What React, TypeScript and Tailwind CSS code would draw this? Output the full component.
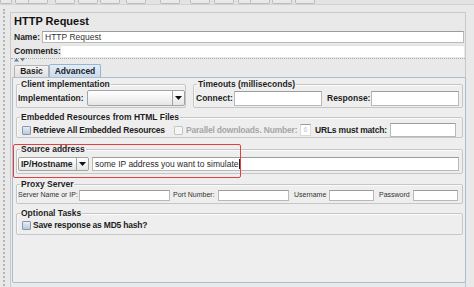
import React from "react";

const font = "font-['Liberation_Sans',Arial,sans-serif]";

function Group({ title, className, children }: { title: string; className?: string; children: React.ReactNode }) {
  return (
    <fieldset className={`min-w-0 rounded-[2px] border border-[#c6c6c6] shadow-[inset_1px_1px_0_#fafafa] ${className ?? ""}`}>
      <legend className="ml-[3px] px-[1px] text-[8.5px] font-bold leading-[9px] text-[#1e1e1e]">{title}</legend>
      {children}
    </fieldset>
  );
}

function Field({ className, children }: { className?: string; children?: React.ReactNode }) {
  return (
    <div className={`flex items-center border border-[#b9b9b9] border-t-[#9c9c9c] bg-white ${className ?? ""}`}>
      {children}
    </div>
  );
}

function Check({ disabled }: { disabled?: boolean }) {
  return (
    <span
      className={
        disabled
          ? "inline-block h-[9px] w-[9px] shrink-0 rounded-[1px] border border-[#c4c4c4] bg-[#f6f6f6]"
          : "inline-block h-[9px] w-[9px] shrink-0 rounded-[1px] border border-[#8797ab] bg-gradient-to-b from-[#e6edf5] to-[#b9c9dc]"
      }
    />
  );
}

function Combo({ className, children }: { className?: string; children?: React.ReactNode }) {
  return (
    <div className={`flex items-stretch rounded-[2px] border border-[#a3a3a3] bg-gradient-to-b from-[#ffffff] to-[#e6e6e6] ${className ?? ""}`}>
      <div className="flex flex-1 items-center pl-[2px] text-[8.5px] font-bold">{children}</div>
      <div className="flex w-[12px] items-center justify-center border-l border-[#a3a3a3]">
        <svg width="7" height="4" viewBox="0 0 7 4">
          <path d="M0 0h7L3.5 4z" fill="#111" />
        </svg>
      </div>
    </div>
  );
}

const topBoxes = [0, 15, 28, 55, 78, 100, 126, 160, 190, 214, 238, 250, 272, 295];

export default function App() {
  return (
    <div className={`${font} relative h-[287px] w-[474px] overflow-hidden bg-[#e9e9e9] text-[#1e1e1e]`}>
      {/* toolbar bottom edge */}
      <div className="flex h-[5px] items-start border-b border-[#d2d2d2] bg-[#e3e3e3]">
        {topBoxes.map((x, i) => (
          <div
            key={x}
            className="h-[4px] rounded-b-[2px] border border-t-0 border-[#bdbdbd] bg-[#e9e9e9]"
            style={{ marginLeft: i === 0 ? x : x - topBoxes[i - 1] - (i === 1 ? 12 : 20), width: i === 0 ? 12 : 20 }}
          />
        ))}
      </div>

      <div className="flex">
        {/* split pane divider */}
        <div className="mt-[4px] h-[280px] w-[10px] pl-[3px]">
          <div className="h-full border-l-2 border-dotted border-[#b4b4b4]" />
        </div>

        <div className="mt-[7px] h-[275px] w-[456px] border-l border-r border-t border-[#c9c9c9]">
          {/* title */}
          <div className="pl-[3px] pt-[1px] text-[11px] font-bold leading-[14px] text-[#111]">HTTP Request</div>

          {/* name */}
          <div className="mt-[3px] flex h-[12px] items-center">
            <span className="w-[31px] pl-[3px] text-[8.5px] font-bold">Name:</span>
            <Field className="h-[12px] w-[422px] pl-[2px] text-[8.5px] text-[#333]">HTTP Request</Field>
          </div>

          {/* comments */}
          <div className="mt-[2px] flex h-[12px] items-center">
            <span className="w-[50px] pl-[3px] text-[8.5px] font-bold">Comments:</span>
            <div className="h-[12px] w-[403px] border-t border-[#e2e2e2] bg-white" />
          </div>

          {/* divider */}
          <div className="relative mt-[1px] w-[454px] border-t border-dotted border-[#a9a9a9]">
            <svg className="absolute left-[3px] top-[-1px]" width="11" height="4" viewBox="0 0 11 4">
              <path d="M0 3.5L2.5 0 5 3.5z M6 0h5L8.5 3.5z" fill="#6f7f95" />
            </svg>
          </div>

          {/* tabs */}
          <div className="mt-[5px] flex h-[13px] items-end pl-[3px]">
            <div className="flex h-[12px] w-[35px] items-center justify-center rounded-tl-[2px] border border-b-0 border-[#b3b3b3] bg-gradient-to-b from-[#f2f2f2] to-[#e0e0e0] text-[8.5px] font-bold">
              Basic
            </div>
            <div className="flex h-[13px] w-[52px] items-center justify-center rounded-t-[2px] border border-b-0 border-[#9bb3cc] bg-gradient-to-b from-[#e3edf8] to-[#c9dbef] text-[8.5px] font-bold">
              Advanced
            </div>
          </div>

          {/* tab panel */}
          <div className="relative ml-[1px] h-[206px] w-[454px] rounded-b-[2px] border border-[#a9bdd3] bg-[#eeeeee] pl-[3px]">
            <div className="mt-[2px] flex gap-[7px]">
              <Group title="Client implementation" className="w-[170px] pb-[1px] pt-[1px]">
                <div className="flex h-[16px] items-center pl-[1px]">
                  <span className="w-[69px] text-[8.5px] font-bold">Implementation:</span>
                  <Combo className="h-[16px] w-[98px]" />
                </div>
              </Group>
              <Group title="Timeouts (milliseconds)" className="w-[270px] pb-[1px] pt-[1px]">
                <div className="flex h-[16px] items-center pl-[2px]">
                  <span className="w-[38px] text-[8.5px] font-bold">Connect:</span>
                  <Field className="h-[15px] w-[88px]" />
                  <span className="ml-[5px] w-[44px] text-[8.5px] font-bold">Response:</span>
                  <Field className="h-[15px] w-[88px]" />
                </div>
              </Group>
            </div>

            <Group title="Embedded Resources from HTML Files" className="mt-[5px] w-[447px] pt-[1px]">
              <div className="flex h-[14px] items-center pl-[5px]">
                <Check />
                <span className="ml-[2px] w-[141px] text-[8.5px] font-bold tracking-[-0.2px]">Retrieve All Embedded Resources</span>
                <Check disabled />
                <span className="ml-[3px] w-[114px] text-[8.5px] font-bold tracking-[-0.2px] text-[#a6a6a6]">Parallel downloads. Number:</span>
                <Field className="h-[12px] w-[11px] justify-center border-[#dadada] text-[7px] text-[#c6c6c6]">6</Field>
                <span className="ml-[4px] w-[75px] text-[8.5px] font-bold tracking-[-0.2px]">URLs must match:</span>
                <Field className="h-[14px] w-[66px]" />
              </div>
            </Group>

            <Group title="Source address" className="mt-[7px] w-[447px] pb-[2px] pt-[3px]">
              <div className="flex h-[14px] items-center pl-[1px]">
                <Combo className="h-[14px] w-[71px]">IP/Hostname</Combo>
                <Field className="ml-[3px] h-[14px] w-[367px] pl-[2px] text-[8.5px] text-[#2a2a2a]">
                  some IP address you want to simulate
                  <span className="ml-[1px] inline-block h-[10px] w-px bg-[#222]" />
                </Field>
              </div>
            </Group>

            <Group title="Proxy Server" className="mt-[6px] w-[447px] pb-[2px] pt-[1px]">
              <div className="flex h-[11px] items-center pl-[1px] text-[7px] text-[#333]">
                <span className="w-[61px]">Server Name or IP:</span>
                <Field className="h-[11px] w-[91px]" />
                <span className="ml-[3px] w-[45px]">Port Number:</span>
                <Field className="h-[11px] w-[71px]" />
                <span className="ml-[5px] w-[35px]">Username</span>
                <Field className="h-[11px] w-[45px]" />
                <span className="ml-[5px] w-[34px]">Password</span>
                <Field className="h-[11px] w-[45px]" />
              </div>
            </Group>

            <Group title="Optional Tasks" className="mt-[5px] w-[447px] pb-[4px] pt-[2px]">
              <div className="flex h-[10px] items-center pl-[5px]">
                <Check />
                <span className="ml-[2px] text-[8.5px] font-bold tracking-[-0.2px]">Save response as MD5 hash?</span>
              </div>
            </Group>

            {/* highlight annotation */}
            <div className="pointer-events-none absolute left-0 top-[66px] h-[34px] w-[228px] rounded-[2px] border-[1.5px] border-[#e2403f]" />
          </div>
        </div>
      </div>
    </div>
  );
}
